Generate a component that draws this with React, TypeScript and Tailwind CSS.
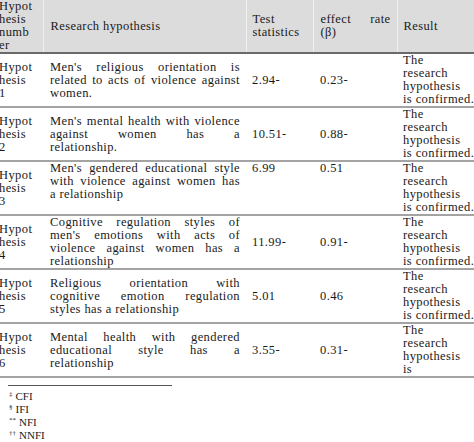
interface Row {
  num: string;
  lines: string[];
  top?: boolean;
  stat: string;
  beta: string;
  result: string[];
}

const ROWS: Row[] = [
  {
    num: '1',
    lines: ["Men's religious orientation is", 'related to acts of violence against', 'women.'],
    stat: '2.94-',
    beta: '0.23-',
    result: ['The', 'research', 'hypothesis', 'is confirmed.'],
  },
  {
    num: '2',
    lines: ["Men's mental health with violence", 'against women has a', 'relationship.'],
    stat: '10.51-',
    beta: '0.88-',
    result: ['The', 'research', 'hypothesis', 'is confirmed.'],
  },
  {
    num: '3',
    lines: ["Men's gendered educational style", 'with violence against women has', 'a relationship'],
    top: true,
    stat: '6.99',
    beta: '0.51',
    result: ['The', 'research', 'hypothesis', 'is confirmed.'],
  },
  {
    num: '4',
    lines: ['Cognitive regulation styles of', "men's emotions with acts of", 'violence against women has a', 'relationship'],
    stat: '11.99-',
    beta: '0.91-',
    result: ['The', 'research', 'hypothesis', 'is confirmed.'],
  },
  {
    num: '5',
    lines: ['Religious orientation with', 'cognitive emotion regulation', 'styles has a relationship'],
    stat: '5.01',
    beta: '0.46',
    result: ['The', 'research', 'hypothesis', 'is confirmed.'],
  },
  {
    num: '6',
    lines: ['Mental health with gendered', 'educational style has a', 'relationship'],
    stat: '3.55-',
    beta: '0.31-',
    result: ['The', 'research', 'hypothesis', 'is'],
  },
];

// every line but the last is stretched edge to edge, as in the printed table
function Justified({ lines }: { lines: string[] }) {
  return (
    <>
      {lines.map((l, i) => (
        <div
          key={i}
          className={
            i < lines.length - 1
              ? 'whitespace-nowrap text-justify [text-align-last:justify]'
              : 'whitespace-nowrap'
          }
        >
          {l}
        </div>
      ))}
    </>
  );
}

const NOTES = [
  { mark: '‡', label: 'CFI' },
  { mark: '§', label: 'IFI' },
  { mark: '**', label: 'NFI' },
  { mark: '††', label: 'NNFI' },
];

export default function App() {
  return (
    <div className="w-[474px] h-[442px] bg-white overflow-hidden text-[#1a1a1a]">
      <table className="w-full table-fixed border-collapse text-[12.5px] leading-[13px] tracking-[0.4px] font-['Liberation_Serif',serif]">
        <colgroup>
          <col className="w-[43px]" />
          <col className="w-[203px]" />
          <col className="w-[67px]" />
          <col className="w-[84px]" />
          <col className="w-[77px]" />
        </colgroup>
        <thead>
          <tr className="bg-[#dcdcdc] border-b-2 border-[#6a6a6a]">
            <th className="align-middle text-left font-normal overflow-hidden">
              <div className="-ml-px">
                Hypot<br />hesis<br />numb<br />er
              </div>
            </th>
            <th className="align-middle text-left font-normal pl-[7px] border-l border-[#f0f0f0]">
              Research hypothesis
            </th>
            <th className="align-middle text-left font-normal pl-[6px] border-l border-[#f0f0f0]">
              Test<br />statistics
            </th>
            <th className="align-middle text-left font-normal pl-[7px] pr-[6px] border-l border-[#f0f0f0]">
              <div className="text-justify [text-align-last:justify]">effect rate</div>
              <div>(β)</div>
            </th>
            <th className="align-middle text-left font-normal pl-[6px] border-l border-[#f0f0f0]">
              Result
            </th>
          </tr>
        </thead>
        <tbody>
          {ROWS.map((r) => (
            <tr key={r.num} className="border-b-2 border-[#a3a3a3]">
              <td className="align-middle overflow-hidden">
                <div className="-ml-px">
                  Hypot<br />hesis<br />{r.num}
                </div>
              </td>
              <td className={`${r.top ? 'align-top' : 'align-middle'} pl-[7px] pr-[6px]`}>
                <Justified lines={r.lines} />
              </td>
              <td className={`${r.top ? 'align-top' : 'align-middle'} pl-[6px]`}>{r.stat}</td>
              <td className={`${r.top ? 'align-top' : 'align-middle'} pl-[7px]`}>{r.beta}</td>
              <td className="align-top pl-[6px] whitespace-nowrap overflow-hidden">
                {r.result.map((t, i) => (
                  <div key={i}>{t}</div>
                ))}
              </td>
            </tr>
          ))}
        </tbody>
      </table>

      <div className="mt-[7px] ml-[8px] w-[164px] border-t border-[#555]" />
      <div className="mt-[4px] ml-[9px] text-[11px] leading-[13px] font-['Liberation_Serif',serif]">
        {NOTES.map((n) => (
          <div key={n.label} className="flex items-start gap-[3px]">
            <span className="text-[7px] leading-[9px]">{n.mark}</span>
            <span>{n.label}</span>
          </div>
        ))}
      </div>
    </div>
  );
}
